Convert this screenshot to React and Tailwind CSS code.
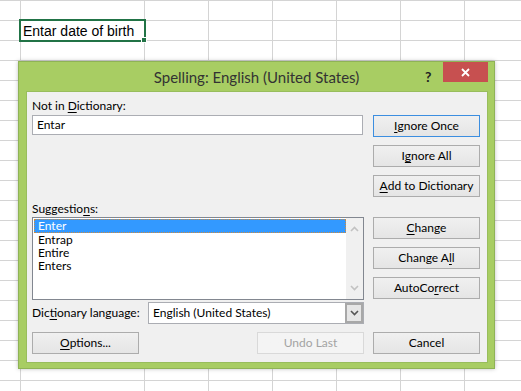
import React from "react"

const FONT = { fontFamily: "Lato, 'Noto Sans', sans-serif" };

const colWidths = ["w-[21px]", "w-[124px]", "w-[64px]", "w-[64px]", "w-[64px]", "w-[64px]", "w-[64px]", "w-[64px]"];

const Sheet = () => (
  <div className="absolute inset-0 flex flex-col">
    { Array.from({ length: 20 }).map((_, r) => (
      <div key={ r } className="flex h-[20px] shrink-0 border-t border-[#d4d4d4]">
        { colWidths.map((w, c) => (
          <div key={ c } className={ `${ w } shrink-0 h-full border-r border-[#d4d4d4]` }/>
        )) }
      </div>
    )) }
  </div>
)

const Btn = ({ children, focused, disabled, className = "" }) => (
  <div className={ `
      h-[22px] w-[107px] flex items-center justify-center text-[12px] whitespace-nowrap
      bg-gradient-to-b from-[#f0f0f0] to-[#e5e5e5]
      ${ focused ? "border border-[#3c8ee0]" : "border border-[#acacac]" }
      ${ disabled ? "text-[#a3a3a3] border-[#d9d9d9] from-[#f4f4f4] to-[#f4f4f4]" : "text-black" }
      ${ className }
    ` }
  >
    { children }
  </div>
)

const U = ({ children }) => <span className="underline underline-offset-2 decoration-1">{ children }</span>

const Chevron = ({ up, className = "" }) => (
  <svg width="9" height="6" viewBox="0 0 9 6" className={ className }>
    <path d={ up ? "M1 5 L4.5 1.5 L8 5" : "M1 1 L4.5 4.5 L8 1" }
      fill="none" stroke="currentColor" strokeWidth="1.6"/>
  </svg>
)

const suggestions = ["Entrap", "Entire", "Enters"];

const Dialog = () => (
  <div className="absolute left-[18px] top-[61px] w-[477px] h-[308px] bg-[#a8cd63] border border-[#8fb356] flex flex-col shadow-[0_0_4px_rgba(0,0,0,0.25)]"
    style={ FONT }
  >
    <div className="relative h-[29px] shrink-0 flex items-center justify-center">
      <span className="text-[15px] text-[#333] pt-[1px]">Spelling: English (United States)</span>
      <span className="absolute left-[406px] top-[4px] text-[14px] font-bold text-[#222]">?</span>
      <div className="absolute left-[424px] top-0 w-[45px] h-[20px] bg-[#c75050] flex items-center justify-center">
        <svg width="9" height="9" viewBox="0 0 9 9">
          <path d="M1 1 L8 8 M8 1 L1 8" stroke="white" strokeWidth="1.8"/>
        </svg>
      </div>
    </div>
    <div className="ml-[7px] mr-[6px] mb-[5px] flex-1 bg-[#f0f0f0] border border-[#98bd5c] flex pl-[5px] text-[12px] text-black">
      <div className="w-[332px] flex flex-col">
        <div className="mt-[6px] h-[15px] leading-[15px]">Not in <U>D</U>ictionary:</div>
        <div className="mt-[2px] h-[20px] w-[331px] bg-white border border-[#abadb3] flex items-center pl-[4px]">Entar</div>
        <div className="mt-[66px] h-[15px] leading-[15px]">Suggestio<U>n</U>s:</div>
        <div className="mt-[1px] h-[83px] bg-white border border-[#828790] flex">
          <div className="flex-1 pt-[1px] pl-[1px]">
            <div className="h-[14px] leading-[12px] bg-[#3399ff] text-white border border-dotted border-[#d08a3a] pl-[3px]">Enter</div>
            { suggestions.map(s => (
              <div key={ s } className="h-[13px] leading-[13px] pl-[4px]">{ s }</div>
            )) }
          </div>
          <div className="w-[17px] bg-[#f0f0f0] flex flex-col items-center justify-between py-[8px] text-[#c2c2c2]">
            <Chevron up/>
            <Chevron/>
          </div>
        </div>
        <div className="mt-[2px] h-[22px] flex items-center">
          <div className="w-[116px] whitespace-nowrap">Dic<U>t</U>ionary language:</div>
          <div className="w-[216px] h-full bg-white border border-[#abadb3] flex">
            <div className="flex-1 flex items-center pl-[4px]">English (United States)</div>
            <div className="w-[18px] bg-[#e6e6e6] border-2 border-[#a8a8a8] flex items-center justify-center text-[#555]">
              <Chevron/>
            </div>
          </div>
        </div>
        <div className="mt-[8px] flex justify-between">
          <Btn><U>O</U>ptions...</Btn>
          <Btn disabled>Undo Last</Btn>
        </div>
      </div>
      <div className="ml-[9px] flex flex-col">
        <Btn focused className="mt-[23px]"><U>I</U>gnore Once</Btn>
        <Btn className="mt-[8px]">I<U>g</U>nore All</Btn>
        <Btn className="mt-[8px]"><U>A</U>dd to Dictionary</Btn>
        <Btn className="mt-[20px]"><U>C</U>hange</Btn>
        <Btn className="mt-[8px]">Change A<U>l</U>l</Btn>
        <Btn className="mt-[8px]">AutoCo<U>r</U>rect</Btn>
        <Btn className="mt-[33px]">Cancel</Btn>
      </div>
    </div>
  </div>
)

export default function App() {
  return (
    <div className="relative w-[521px] h-[391px] overflow-hidden bg-white">
      <Sheet/>
      <div className="absolute left-[19px] top-[19px] w-[127px] h-[23px] border-2 border-[#217346]"/>
      <div className="absolute left-[141px] top-[37px] w-[6px] h-[6px] bg-[#217346] border border-white"/>
      <div className="absolute left-[23px] top-[21px] h-[20px] flex items-center text-[14px] text-black"
        style={ { fontFamily: "'Liberation Sans', Arial, sans-serif" } }
      >
        Entar date of birth
      </div>
      <Dialog/>
    </div>
  )
}
